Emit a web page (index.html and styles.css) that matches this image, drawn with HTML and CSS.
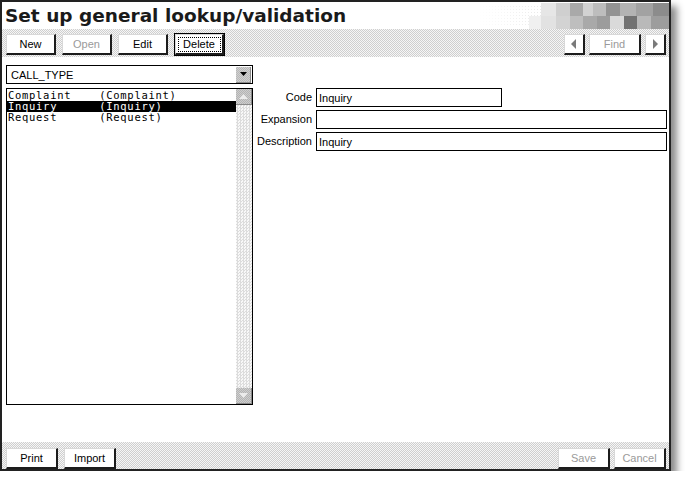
FILE: index.html
```html
<!DOCTYPE html>
<html>
<head>
    <title>Set up general lookup/validation</title>
    <link rel="stylesheet" href="styles.css">
</head>
<body>
    <div class="window">
        <div class="titlebar">
            <h1>Set up general lookup/validation</h1>
            <svg class="mosaic" width="190" height="27" viewBox="0 0 190 27">
                <defs>
                    <pattern id="dots" width="3" height="3" patternUnits="userSpaceOnUse">
                        <rect x="1" y="1" width="1" height="1" fill="#b8b8b8"/>
                    </pattern>
                    <linearGradient id="fade" x1="0" x2="1">
                        <stop offset="0" stop-color="#fff" stop-opacity="0"/>
                        <stop offset="1" stop-color="#fff" stop-opacity="1"/>
                    </linearGradient>
                    <mask id="fadeMask">
                        <rect width="190" height="27" fill="url(#fade)"/>
                    </mask>
                </defs>
                <rect x="0" y="3" width="190" height="22" fill="url(#dots)" mask="url(#fadeMask)"/>
                <!-- top row of squares -->
                <rect x="62" y="1" width="15" height="13" fill="#e6e6e6"/>
                <rect x="77" y="1" width="14" height="13" fill="#cfcfcf"/>
                <rect x="91" y="1" width="13" height="13" fill="#a9a9a9"/>
                <rect x="104" y="1" width="10" height="13" fill="#d2d2d2"/>
                <rect x="114" y="1" width="13" height="13" fill="#bdbdbd"/>
                <rect x="127" y="1" width="14" height="13" fill="#939393"/>
                <rect x="141" y="1" width="16" height="13" fill="#b3b3b3"/>
                <rect x="157" y="1" width="17" height="13" fill="#a2a2a2"/>
                <rect x="174" y="1" width="16" height="13" fill="#8c8c8c"/>
                <!-- bottom row of squares -->
                <rect x="50" y="14" width="12" height="13" fill="#f0f0f0"/>
                <rect x="62" y="14" width="15" height="13" fill="#e2e2e2"/>
                <rect x="77" y="14" width="14" height="13" fill="#d3d3d3"/>
                <rect x="91" y="14" width="13" height="13" fill="#bebebe"/>
                <rect x="104" y="14" width="14" height="13" fill="#a9a9a9"/>
                <rect x="118" y="14" width="13" height="13" fill="#9c9c9c"/>
                <rect x="131" y="14" width="14" height="13" fill="#dadada"/>
                <rect x="145" y="14" width="13" height="13" fill="#727272"/>
                <rect x="158" y="14" width="14" height="13" fill="#b9b9b9"/>
                <rect x="172" y="14" width="18" height="13" fill="#9d9d9d"/>
            </svg>
        </div>

        <div class="toolbar">
            <div class="group">
                <button class="btn">New</button>
                <button class="btn" disabled>Open</button>
                <button class="btn">Edit</button>
                <button class="btn focused"><span>Delete</span></button>
            </div>
            <div class="group nav">
                <button class="btn arrow">
                    <svg width="6" height="10" viewBox="0 0 6 10"><path d="M5 0 L0 5 L5 10 Z" fill="#7a7a7a"/></svg>
                </button>
                <button class="btn find" disabled>Find</button>
                <button class="btn arrow">
                    <svg width="6" height="10" viewBox="0 0 6 10"><path d="M1 0 L6 5 L1 10 Z" fill="#7a7a7a"/></svg>
                </button>
            </div>
        </div>

        <div class="content">
            <div class="lookup">
                <div class="combo">
                    <span class="combo-text">CALL_TYPE</span>
                    <span class="drop">
                        <svg width="7" height="4" viewBox="0 0 7 4"><path d="M0 0 H7 L3.5 4 Z" fill="#000"/></svg>
                    </span>
                </div>
                <div class="listbox">
                    <ul class="rows">
                        <li>Complaint    (Complaint)</li>
                        <li class="selected">Inquiry      (Inquiry)</li>
                        <li>Request      (Request)</li>
                    </ul>
                    <div class="scrollbar">
                        <span class="sb-btn">
                            <svg width="9" height="5" viewBox="0 0 9 5"><path d="M0 5 H9 L4.5 0 Z" fill="#ececec"/></svg>
                        </span>
                        <span class="track"></span>
                        <span class="sb-btn">
                            <svg width="9" height="5" viewBox="0 0 9 5"><path d="M0 0 H9 L4.5 5 Z" fill="#ececec"/></svg>
                        </span>
                    </div>
                </div>
            </div>

            <form class="fields">
                <label for="code">Code</label>
                <div class="field-row"><input id="code" class="short" type="text" value="Inquiry"></div>

                <label for="expansion">Expansion</label>
                <div class="field-row"><input id="expansion" type="text" value=""></div>

                <label for="description">Description</label>
                <div class="field-row"><input id="description" type="text" value="Inquiry"></div>
            </form>
        </div>

        <div class="footer">
            <div class="group">
                <button class="btn wide">Print</button>
                <button class="btn wide">Import</button>
            </div>
            <div class="group nav">
                <button class="btn wide" disabled>Save</button>
                <button class="btn wide" disabled>Cancel</button>
            </div>
        </div>
    </div>
</body>
</html>
```

FILE: styles.css
```css
body {
    margin: 0;
    background-color: #fff;
    font-family: "Liberation Sans", Arial, sans-serif;
    font-size: 11px;
    color: #000;
}

.window {
    box-sizing: border-box;
    width: 671px;
    height: 471px;
    border: 2px solid #222;
    display: flex;
    flex-direction: column;
    background-color: #fff;
    box-shadow: 6px 6px 7px rgba(0, 0, 0, 0.45);
}

/* title */

.titlebar {
    height: 27px;
    display: flex;
    justify-content: space-between;
    align-items: flex-start;
    padding-left: 3px;
}

.titlebar h1 {
    margin: 0;
    font-family: "DejaVu Sans", Verdana, sans-serif;
    font-weight: bold;
    font-size: 18.5px;
    line-height: 27px;
    color: #1a1a1a;
    white-space: nowrap;
}

.mosaic {
    display: block;
}

/* bars */

.toolbar,
.footer {
    display: flex;
    justify-content: space-between;
    background: repeating-conic-gradient(#cfcfcf 0 25%, #f6f6f6 0 50%) 0 0 / 2px 2px;
}

.toolbar {
    height: 28px;
    padding: 5px 3px 0 4px;
    box-sizing: border-box;
}

.footer {
    height: 27px;
    padding: 6px 3px 0 4px;
    box-sizing: border-box;
}

.group {
    display: flex;
    gap: 6px;
    align-items: flex-start;
}

.group.nav {
    gap: 4px;
}

/* buttons */

.btn {
    box-sizing: border-box;
    width: 50px;
    height: 21px;
    padding: 0;
    background-color: #fff;
    border: 1px solid #d8d8d8;
    border-right: 2px solid #1c1c1c;
    border-bottom: 2px solid #1c1c1c;
    font-family: "Liberation Sans", Arial, sans-serif;
    font-size: 11px;
    color: #000;
    display: flex;
    align-items: center;
    justify-content: center;
}

.btn:disabled {
    color: #9a9a9a;
}

.btn.focused {
    outline: 1px solid #000;
    outline-offset: 0;
    width: 49px;
    margin-left: 1px;
}

.btn.focused span {
    box-sizing: border-box;
    width: 43px;
    height: 15px;
    border: 1px dotted #000;
    display: flex;
    align-items: center;
    justify-content: center;
}

.btn.arrow {
    width: 21px;
}

.btn.find {
    width: 52px;
}

.btn.wide {
    width: 52px;
    height: 21px;
}

/* content */

.content {
    flex: 1;
    display: flex;
    padding: 8px 2px 0 4px;
}

.lookup {
    width: 247px;
    display: flex;
    flex-direction: column;
    gap: 4px;
}

.combo {
    box-sizing: border-box;
    height: 19px;
    border: 1px solid #000;
    display: flex;
    align-items: center;
    justify-content: space-between;
    padding-left: 4px;
}

.combo-text {
    font-size: 11px;
}

.drop {
    width: 14px;
    height: 15px;
    margin-right: 1px;
    display: flex;
    align-items: center;
    justify-content: center;
    background: repeating-conic-gradient(#b8b8b8 0 25%, #d0d0d0 0 50%) 0 0 / 2px 2px;
    border-right: 1px solid #8a8a8a;
    border-bottom: 1px solid #8a8a8a;
}

.listbox {
    box-sizing: border-box;
    height: 317px;
    border: 1px solid #000;
    display: flex;
}

.rows {
    flex: 1;
    margin: 0;
    padding: 1px 0 0;
    list-style: none;
    font-family: "DejaVu Sans Mono", "Liberation Mono", monospace;
    font-size: 10.5px;
    letter-spacing: 0.7px;
    line-height: 11px;
}

.rows li {
    padding-left: 1px;
    height: 11px;
    white-space: pre;
}

.rows li.selected {
    background-color: #000;
    color: #fff;
}

.scrollbar {
    width: 16px;
    display: flex;
    flex-direction: column;
}

.sb-btn {
    height: 15px;
    display: flex;
    align-items: center;
    justify-content: center;
    background: repeating-conic-gradient(#b4b4b4 0 25%, #cecece 0 50%) 0 0 / 2px 2px;
    border-right: 1px solid #8a8a8a;
    border-bottom: 1px solid #8a8a8a;
}

.track {
    flex: 1;
    background: repeating-conic-gradient(#dcdcdc 0 25%, #f8f8f8 0 50%) 0 0 / 3px 3px;
}

/* fields */

.fields {
    flex: 1;
    margin: 23px 0 0;
    display: grid;
    grid-template-columns: 59px 1fr;
    column-gap: 4px;
    row-gap: 3px;
    align-content: start;
}

.fields label {
    text-align: right;
    line-height: 19px;
}

.fields input {
    box-sizing: border-box;
    width: 100%;
    height: 19px;
    margin: 0;
    padding: 0 2px;
    border: 1px solid #000;
    font-family: "Liberation Sans", Arial, sans-serif;
    font-size: 11px;
    color: #000;
    outline: none;
}

.fields input.short {
    width: 186px;
}
```
